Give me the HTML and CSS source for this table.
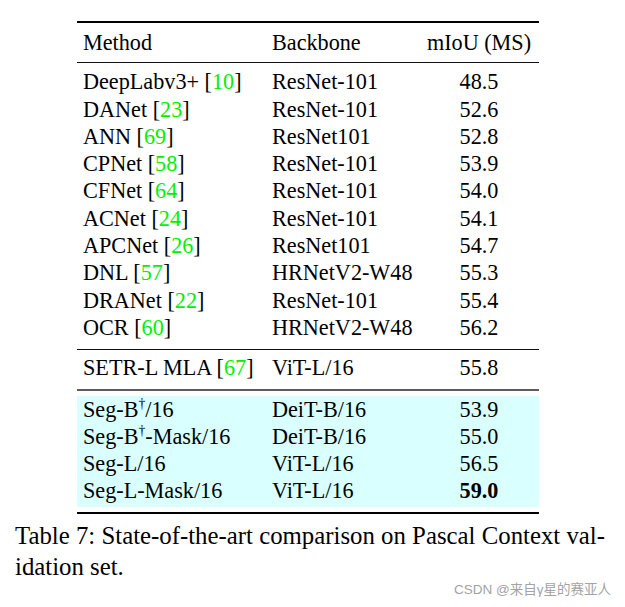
FILE: index.html
```html
<!DOCTYPE html>
<html>
<head>
<meta charset="utf-8">
<link rel="stylesheet" href="styles.css">
</head>
<body>
<div class="page">
  <div class="tbl">
    <div class="rule thick"></div>
    <div class="group head">
      <div class="row"><span class="c1">Method</span><span class="c2">Backbone</span><span class="c3">mIoU (MS)</span></div>
    </div>
    <div class="rule thin"></div>
    <div class="group g1">
      <div class="row"><span class="c1">DeepLabv3+ [<span class="cite">10</span>]</span><span class="c2">ResNet-101</span><span class="c3">48.5</span></div>
      <div class="row"><span class="c1">DANet [<span class="cite">23</span>]</span><span class="c2">ResNet-101</span><span class="c3">52.6</span></div>
      <div class="row"><span class="c1">ANN [<span class="cite">69</span>]</span><span class="c2">ResNet101</span><span class="c3">52.8</span></div>
      <div class="row"><span class="c1">CPNet [<span class="cite">58</span>]</span><span class="c2">ResNet-101</span><span class="c3">53.9</span></div>
      <div class="row"><span class="c1">CFNet [<span class="cite">64</span>]</span><span class="c2">ResNet-101</span><span class="c3">54.0</span></div>
      <div class="row"><span class="c1">ACNet [<span class="cite">24</span>]</span><span class="c2">ResNet-101</span><span class="c3">54.1</span></div>
      <div class="row"><span class="c1">APCNet [<span class="cite">26</span>]</span><span class="c2">ResNet101</span><span class="c3">54.7</span></div>
      <div class="row"><span class="c1">DNL [<span class="cite">57</span>]</span><span class="c2">HRNetV2-W48</span><span class="c3">55.3</span></div>
      <div class="row"><span class="c1">DRANet [<span class="cite">22</span>]</span><span class="c2">ResNet-101</span><span class="c3">55.4</span></div>
      <div class="row"><span class="c1">OCR [<span class="cite">60</span>]</span><span class="c2">HRNetV2-W48</span><span class="c3">56.2</span></div>
    </div>
    <div class="rule thin"></div>
    <div class="group g2">
      <div class="row"><span class="c1">SETR-L MLA [<span class="cite">67</span>]</span><span class="c2">ViT-L/16</span><span class="c3">55.8</span></div>
    </div>
    <div class="rule mid"></div>
    <div class="group g3">
      <div class="hl">
        <div class="row"><span class="c1">Seg-B<sup class="dag">&dagger;</sup>/16</span><span class="c2">DeiT-B/16</span><span class="c3">53.9</span></div>
        <div class="row"><span class="c1">Seg-B<sup class="dag">&dagger;</sup>-Mask/16</span><span class="c2">DeiT-B/16</span><span class="c3">55.0</span></div>
        <div class="row"><span class="c1">Seg-L/16</span><span class="c2">ViT-L/16</span><span class="c3">56.5</span></div>
        <div class="row"><span class="c1">Seg-L-Mask/16</span><span class="c2">ViT-L/16</span><span class="c3"><b>59.0</b></span></div>
      </div>
    </div>
    <div class="rule thick"></div>
  </div>
  <div class="caption">
    <span class="line first">Table 7: State-of-the-art comparison on Pascal Context val-</span>
    <span class="line">idation set.</span>
  </div>
  <div class="watermark">CSDN @来自γ星的赛亚人</div>
</div>
</body>
</html>
```

FILE: styles.css
```css
html, body {
  margin: 0;
  padding: 0;
  background: #ffffff;
}

.page {
  position: relative;
  width: 625px;
  height: 607px;
  padding-top: 21px;
  box-sizing: border-box;
  font-family: "Liberation Serif", "Times New Roman", serif;
  color: #000;
}

.tbl {
  width: 462px;
  margin-left: 77px;
  font-size: 22.2px;
}

.rule {
  background: #000;
}
.rule.thick { height: 2px; }
.rule.thin { height: 1px; background: #111; }
.rule.mid { height: 2px; background: #5c5c5c; }

.row {
  display: grid;
  grid-template-columns: 195px 147px 120px;
  height: 27.3px;
  line-height: 27.3px;
  white-space: nowrap;
}

.c1 { padding-left: 6px; }
.c3 { text-align: center; }

.cite { color: #00f000; }

.dag {
  font-size: 0.62em;
  line-height: 0;
  vertical-align: 0.62em;
}

.group.head { padding: 6px 0 6px; }
.group.g1 { padding: 5px 0 8px; }
.group.g2 { padding: 4px 0 7px; }
.group.g3 { padding: 5px 0 5px; }

.hl {
  background: #d9ffff;
  padding-bottom: 2.5px;
}

.caption {
  width: 590px;
  margin: 7px 0 0 15px;
  font-size: 24.8px;
  line-height: 30.5px;
}

.caption .line {
  display: block;
  white-space: nowrap;
}

.caption .line.first {
  text-align: justify;
  text-align-last: justify;
}

.watermark {
  position: absolute;
  right: 14px;
  top: 580px;
  font-family: "Liberation Sans", "Noto Sans CJK SC", sans-serif;
  font-size: 13.5px;
  line-height: 20px;
  color: #a3a3a3;
}
```
